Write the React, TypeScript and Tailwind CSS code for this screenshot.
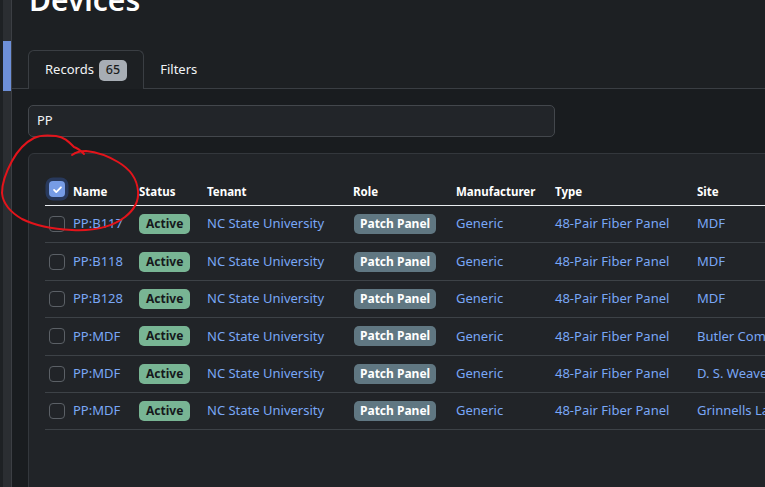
import React from "react";

const rows = [
  { name: "PP:B117", site: "MDF" },
  { name: "PP:B118", site: "MDF" },
  { name: "PP:B128", site: "MDF" },
  { name: "PP:MDF", site: "Butler Communications" },
  { name: "PP:MDF", site: "D. S. Weaver Labs" },
  { name: "PP:MDF", site: "Grinnells Laboratory" },
];

function Cols({ children, className, align }: { children: React.ReactNode[]; className: string; align: string }) {
  const widths = ["w-[28px]", "w-[66px]", "w-[68px]", "w-[146px]", "w-[103px]", "w-[99px]", "w-[142px]", "w-[200px]"];
  return (
    <div className={"flex " + className}>
      {children.map((c, i) => (
        <div key={i} className={widths[i] + " shrink-0 whitespace-nowrap flex " + align}>
          {c}
        </div>
      ))}
    </div>
  );
}

export default function App() {
  return (
    <div className="relative w-[765px] h-[487px] overflow-hidden flex bg-[#191c1f] font-['Noto_Sans',sans-serif] text-[#dee2e6]">
      {/* left sidebar edge */}
      <div className="w-[3px] shrink-0 bg-[#1e2124]" />
      <div className="w-[9px] shrink-0 bg-[#2b2e32] border-r border-[#3c3f44] flex flex-col">
        <div className="mt-[41px] h-[50px] bg-[#6d8fd8]" />
      </div>

      {/* main */}
      <div className="flex-1 flex flex-col min-w-0">
        <div className="bg-[#1d2023] border-b border-[#3a3e43] pl-[16px] shrink-0">
          <h1 className="mt-[-18px] ml-[1px] text-[30px] leading-[36px] font-semibold text-white">Devices</h1>
          <div className="flex mt-[32px] h-[39px] -mb-px">
            <div className="flex items-center px-[16px] border border-b-0 border-[#3a3e43] rounded-t-[6px] bg-[#1d2023] text-[13px] text-[#f1f3f5]">
              Records
              <span className="ml-[5px] h-[21px] px-[7px] rounded-[5px] bg-[#a7adb4] text-[#1b1e21] text-[12.5px] font-medium flex items-center">65</span>
            </div>
            <div className="flex items-center px-[16px] text-[13px] text-[#f1f3f5]">Filters</div>
          </div>
        </div>

        <div className="pl-[16px] pt-[16px] flex flex-col">
          <div className="w-[527px] h-[32px] rounded-[5px] border border-[#43474c] bg-[#222529] flex items-center px-[8px] text-[13px] text-[#f1f3f5]">
            PP
          </div>

          <div className="mt-[16px] w-[900px] h-[400px] rounded-[6px] border border-[#33373c] bg-[#212428] pl-[16px] pt-[16px]">
            {/* header */}
            <Cols align="items-end pb-[5px]" className="h-[36px] border-b-[1.5px] border-[#e9ecef] text-[11.5px] font-bold text-white">
              {[
                <div className="ml-[4px] mb-[3px] w-[16px] h-[16px] rounded-[4px] bg-[#769ce6] ring-[3.5px] ring-[#28395c] flex items-center justify-center">
                  <svg width="11" height="11" viewBox="0 0 16 16">
                    <path d="M3 8.5l3.2 3.2L13 4.8" fill="none" stroke="#fff" strokeWidth="2.6" strokeLinecap="round" strokeLinejoin="round" />
                  </svg>
                </div>,
                "Name",
                "Status",
                "Tenant",
                "Role",
                "Manufacturer",
                "Type",
                "Site",
              ]}
            </Cols>
            {rows.map((r, i) => (
              <Cols key={i} align="items-center" className="h-[37.4px] border-b border-[#3d4247] text-[13px] text-[#79a7f6]">
                {[
                  <div className="ml-[4px] w-[16px] h-[16px] rounded-[4px] border border-[#5b6066]" />,
                  r.name,
                  <span className="h-[20px] px-[7px] rounded-[5px] bg-[#78b594] text-[#16191c] text-[12px] font-bold flex items-center">Active</span>,
                  "NC State University",
                  <span className="ml-[1px] h-[20px] px-[6px] rounded-[5px] bg-[#607782] text-white text-[12px] font-bold flex items-center">Patch Panel</span>,
                  "Generic",
                  "48-Pair Fiber Panel",
                  r.site,
                ]}
              </Cols>
            ))}
          </div>
        </div>
      </div>

      {/* red hand-drawn annotation */}
      <svg className="absolute left-0 top-0 pointer-events-none" width="765" height="487" viewBox="0 0 765 487">
        <path
          d="M84 154 C80 150 77 148 74 147 C68 141 64 137 56 136 C48 135 40 135 34 138 C26 142 18 150 12 161 C6 172 2 183 2 193 C3 204 10 212 22 219 C34 225 52 229 72 230 C92 231 112 227 125 217 C134 210 139 201 138 191 C137 179 130 169 118 162 C108 156 96 152 86 151 C80 151 76 152 72 155"
          fill="none"
          stroke="#e3141b"
          strokeWidth="2"
          strokeLinecap="round"
          strokeLinejoin="round"
        />
      </svg>
    </div>
  );
}
